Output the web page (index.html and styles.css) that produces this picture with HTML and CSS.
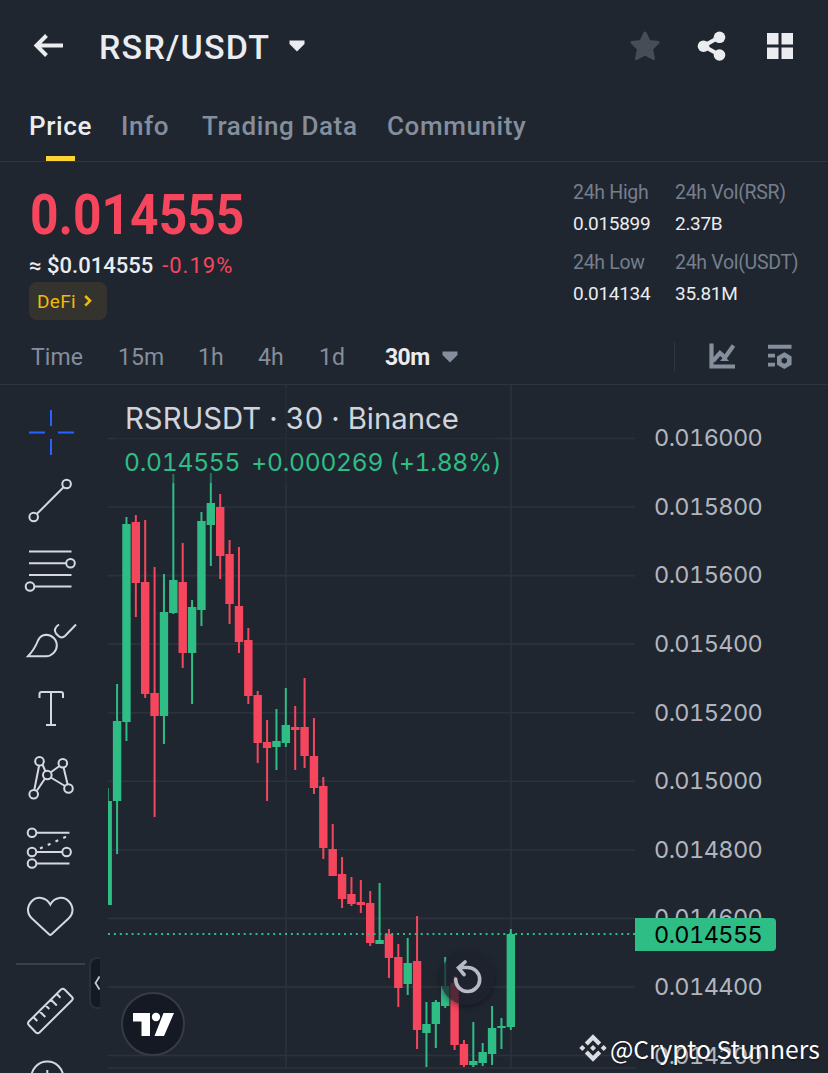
FILE: index.html
```html
<!DOCTYPE html>
<html lang="en">
<head>
<meta charset="UTF-8">
<meta name="viewport" content="width=device-width, initial-scale=1.0">
<title>RSR/USDT</title>
<link rel="stylesheet" href="styles.css">
</head>
<body>
<div class="app">

<header>
    <div class="title-bar">
        <svg class="back" width="30" height="26" viewBox="33 33 30 26"><path d="M63 45.5H37M46.500 35.500L36.500 45.500L46.500 55.500" fill="none" stroke="#eaecef" stroke-width="4"/></svg>
        <h1>RSR/USDT</h1>
        <svg class="caret" width="16" height="12" viewBox="0 0 16 12"><path d="M0.500 0.500h15v3.500L8 11.500L0.500 4z" fill="#eaecef"/></svg>
        <div class="actions">
            <svg width="30" height="30" viewBox="630 31 30 30"><path d="M645 33L649 41.500L658 42.500L651.500 49L653.500 58.500L645 54L636.500 58.500L638.500 49L632 42.500L641 41.500Z" fill="#474d57" stroke="#474d57" stroke-width="3" stroke-linejoin="round"/></svg>
            <svg width="30" height="30" viewBox="697 31 30 30"><path d="M719.500 37L703.500 46L719.500 55" fill="none" stroke="#eaecef" stroke-width="4"/><g fill="#eaecef"><circle cx="719.500" cy="37.300" r="5.800"/><circle cx="703.500" cy="46.200" r="5.800"/><circle cx="719.500" cy="55" r="5.800"/></g></svg>
            <svg width="30" height="30" viewBox="764 31 30 30"><path d="M767 33h11.500v11.500H767zM781.500 33H793v11.500h-11.500zM767 47.500h11.500V59H767zM781.500 47.500H793V59h-11.500z" fill="#eaecef"/></svg>
        </div>
    </div>
    <nav>
        <a class="active" href="#">Price</a>
        <a href="#">Info</a>
        <a href="#">Trading Data</a>
        <a href="#">Community</a>
    </nav>
</header>

<section class="quote">
    <div class="last">
        <div class="price">0.014555</div>
        <div class="approx"><span>≈ $0.014555</span><span class="down">-0.19%</span></div>
        <a class="tag" href="#">DeFi <svg width="8" height="12" viewBox="0 0 8 12"><path d="M1.200 1L6 5.800L1.200 10.600" fill="none" stroke="#f0b90b" stroke-width="2.600"/></svg></a>
    </div>
    <dl class="stats">
        <div><dt>24h High</dt><dd>0.015899</dd></div>
        <div><dt>24h Vol(RSR)</dt><dd>2.37B</dd></div>
        <div><dt>24h Low</dt><dd>0.014134</dd></div>
        <div><dt>24h Vol(USDT)</dt><dd>35.81M</dd></div>
    </dl>
</section>

<div class="intervals">
    <span>Time</span>
    <span>15m</span>
    <span>1h</span>
    <span>4h</span>
    <span>1d</span>
    <span class="active">30m <svg width="16" height="12" viewBox="0 0 16 12"><path d="M0.500 0.500h15v3.500L8 11.500L0.500 4z" fill="#848e9c"/></svg></span>
    <div class="chart-tools">
        <svg width="28" height="28" viewBox="708 343 28 28"><path d="M711.500 343.500V366.500H735M713 361L720 353L725 357.500L733.500 345.500" fill="none" stroke="#848e9c" stroke-width="4.200"/><path d="M720 361h9l-4.500-5z" fill="#848e9c"/></svg>
        <svg width="28" height="28" viewBox="766 343 28 28"><path d="M768 344.700h23.500v4H768zM768 353.800h7v3.700h-7zM768 362.700h7v3.700h-7z" fill="#848e9c"/><path d="M784.300 354.800l5 2.900v5.800l-5 2.900l-5-2.900v-5.800z" fill="none" stroke="#848e9c" stroke-width="4.600"/></svg>
    </div>
</div>

<main>
    <aside>
        <svg class="tool cross" viewBox="22 404 56 56"><path d="M51 410v16M51 439v16M29 432.500h16M58 432.500h16"/></svg>
        <svg class="tool" viewBox="22 473 56 56"><path d="M37 513.800L63.500 487.200"/><circle cx="33.700" cy="517" r="4.300"/><circle cx="66.600" cy="484" r="4.300"/></svg>
        <svg class="tool" viewBox="22 542 56 56"><path d="M29 551.500h42.500M29 563.300h37M29 575h42.500M34.500 586.500h37"/><circle cx="70.500" cy="563.300" r="4.300"/><circle cx="30" cy="586.500" r="4.300"/></svg>
        <svg class="tool" viewBox="22 611 56 56"><path d="M28 656.300H46C52 656 56.800 651 56.800 645.500C56.800 639 51.500 634.800 46 634.800C42 635 39.500 637 38 640.500C35.500 647 33 651 28 656.300Z"/><path d="M59 624.500C54.500 627.500 54 630.500 56 633.500L58.500 636C60.500 637.800 63 637.700 65 636L76 624.500"/></svg>
        <svg class="tool" viewBox="22 680 56 56"><path d="M39.500 698V694q0-2 2-2H61q2 0 2 2v4M51 692v33M46 725h10"/></svg>
        <svg class="tool" viewBox="22 749 56 56"><path d="M39.200 765L34.300 790M37 790.500L45 778.500M42.500 764.500L45.500 771.500M50.500 772.500L59.500 766M63.600 767.500L67.500 784M50.800 777.500L65 786"/><circle cx="39.500" cy="761.300" r="4.300"/><circle cx="62.800" cy="763.300" r="4.300"/><circle cx="47.300" cy="775" r="4.300"/><circle cx="33.700" cy="794.300" r="4.300"/><circle cx="68.500" cy="788.500" r="4.300"/></svg>
        <svg class="tool" viewBox="22 818 56 56"><path d="M36.300 832.800H69.500M36.300 852H62.500M36.300 863.500H69.500"/><path d="M40 848.500L67 836.300" stroke-dasharray="3 5.500"/><circle cx="32" cy="832.800" r="4.300"/><circle cx="32" cy="852" r="4.300"/><circle cx="66.600" cy="852" r="4.300"/><circle cx="32" cy="863.500" r="4.300"/></svg>
        <svg class="tool" viewBox="22 887 56 56"><path d="M50.300 904.500C46 896.500 36.500 896 31.500 901.500C26.500 907 27 914 32 918.500L49.300 934.500q1 .8 2 0L68.500 918.500C73.500 914 74 907 69 901.500C64 896 54.500 896.500 50.300 904.500Z"/></svg>
        <hr>
        <svg class="tool" viewBox="22 983 56 56"><path d="M28.800 1021.500L61 989.500q1.800-1.500 3.600 0L72 997q1.500 1.500 0 3.200L39.500 1032.500q-1.800 1.500-3.600 0L28.800 1025q-1.500-1.700 0-3.500ZM33.800 1017.500l3.500 3.500M39.800 1011.500l5.500 5.500M45.800 1005.500l3.500 3.500M51.300 1000l5.500 5.500M57 994.300l3.500 3.500"/></svg>
        <svg class="tool" viewBox="22 1052 56 56"><circle cx="47.300" cy="1077.500" r="16"/><path d="M47.300 1070v15M40 1077.500h15"/></svg>
        <div class="handle"><svg width="6" height="14" viewBox="0 0 6 14"><path d="M5.500 0.500L1.500 7L5.500 13.500" fill="none" stroke="#c3c6ce" stroke-width="1.800"/></svg></div>
    </aside>
    <div class="plot">
        <svg id="candles" width="528" height="688" viewBox="108 385 528 688"></svg>
        <div class="legend">
            <div class="symbol">RSRUSDT · 30 · Binance</div>
            <div class="change"><span>0.014555</span><span>+0.000269 (+1.88%)</span></div>
        </div>
        <div class="reset"><svg width="32" height="36" viewBox="451 960 32 36"><path d="M455.700 979A12 12 0 1 0 467.700 967.500H459M465 962L458.500 967.800L464 974.500" fill="none" stroke="#b7bac6" stroke-width="3.600" stroke-linecap="round"/></svg></div>
        <div class="tv"><svg width="42" height="26" viewBox="132 1011 42 26"><path d="M133 1013h17v23h-8.500v-14.500H133zM163.500 1013H174l-10 23h-9.500z" fill="#fff"/><circle cx="156" cy="1017" r="4.200" fill="#fff"/></svg></div>
    </div>
    <div class="axis">
        <span>0.016000</span>
        <span>0.015800</span>
        <span>0.015600</span>
        <span>0.015400</span>
        <span>0.015200</span>
        <span>0.015000</span>
        <span>0.014800</span>
        <span>0.014600</span>
        <span>0.014400</span>
        <span>0.014200</span>
        <div class="current">0.014555</div>
    </div>
    <div class="watermark">
        <svg width="28" height="28" viewBox="579 1035 28 28"><path d="M593 1035.300l8.200 8.200l-3 3l-5.200-5.200l-5.200 5.200l-3-3zM593 1062.700l8.200-8.200l-3-3l-5.200 5.200l-5.200-5.200l-3 3zM582.300 1046l3 3l-3 3l-3-3zM603.700 1046l3 3l-3 3l-3-3zM593 1046l3 3l-3 3l-3-3z" fill="#dcdde0"/></svg>
        <span>@Crypto Stunners</span>
    </div>
</main>

</div>
<script src="chart.js"></script>
</body>
</html>
```
FILE: styles.css
```css
body {
    margin: 0;
    background-color: #202630;
    color: #eaecef;
    font-family: Roboto, "Noto Sans", sans-serif;
}

.app {
    width: 828px;
    height: 1073px;
    overflow: hidden;
    display: flex;
    flex-direction: column;
}

svg {
    display: block;
    flex: none;
}

a {
    color: inherit;
    text-decoration: none;
}

header {
    height: 161px;
    border-bottom: 1px solid #2e353f;
    display: flex;
    flex-direction: column;
}

.title-bar {
    height: 92px;
    padding: 0 34px 0 33px;
    display: flex;
    align-items: center;
}

.back {
    margin-bottom: 1px;
}

h1 {
    width: 170px;
    margin: 1px 0 0 36px;
    font-size: 34px;
    line-height: 44px;
    font-weight: 500;
    letter-spacing: 1.2px;
    white-space: nowrap;
}

.caret {
    margin: 0 0 1px 20px;
}

.actions {
    margin-left: auto;
    display: flex;
    gap: 37px;
}

nav {
    flex: 1;
    padding-left: 29px;
    display: grid;
    grid-template-columns: 92px 81px 185px 150px;
    color: #848e9c;
    font-size: 26px;
    font-weight: 500;
    line-height: 69px;
    letter-spacing: 0.6px;
    white-space: nowrap;
}

nav .active {
    position: relative;
    width: 61px;
    color: #eaecef;
}

nav .active::after {
    content: "";
    position: absolute;
    left: 17px;
    bottom: 0;
    width: 29px;
    height: 5px;
    background-color: #fcd535;
}

.quote {
    height: 166px;
    display: flex;
}

.last {
    width: 543px;
    padding-left: 30px;
    white-space: nowrap;
}

.price {
    margin-top: 23px;
    color: #f6465d;
    font-size: 55px;
    line-height: 60px;
    font-weight: 700;
    transform: scaleX(0.905);
    transform-origin: 0 0;
}

.approx {
    margin-top: 6px;
    margin-left: -1px;
    display: flex;
    gap: 9px;
    font-size: 22px;
    line-height: 30px;
    font-weight: 500;
}

.down {
    color: #f6465d;
    font-weight: 400;
    letter-spacing: 1px;
}

.tag {
    width: 70px;
    height: 38px;
    margin: 1px 0 0 -1px;
    padding-left: 8px;
    border-radius: 8px;
    display: flex;
    align-items: center;
    gap: 8px;
    background-color: #35332e;
    color: #f0b90b;
    font-size: 19px;
    letter-spacing: 0.3px;
}

.stats {
    margin: 15px 0 0;
    display: grid;
    grid-template-columns: 102px 150px;
    grid-auto-rows: 69.5px;
    line-height: 31px;
    white-space: nowrap;
}

.stats dt {
    color: #757e8c;
    font-size: 19.5px;
    letter-spacing: -0.3px;
}

.stats dd {
    margin: 0;
    font-size: 19px;
    letter-spacing: -0.3px;
}

.intervals {
    height: 54px;
    padding: 2px 0 0 31px;
    border-bottom: 1px solid #2e353f;
    display: grid;
    grid-template-columns: 87px 80px 60px 61px 66px 289px 1fr;
    align-items: center;
    color: #848e9c;
    font-size: 23px;
    letter-spacing: 0.1px;
}

.intervals .active {
    display: flex;
    align-items: center;
    gap: 12px;
    color: #eaecef;
    font-weight: 700;
    letter-spacing: -0.6px;
}

.chart-tools {
    height: 30px;
    padding-left: 33px;
    border-left: 1px solid #2e353f;
    display: flex;
    align-items: center;
    gap: 30px;
}

main {
    position: relative;
    flex: 1;
    min-height: 0;
    display: flex;
    font-family: Inter, sans-serif;
    font-variant-numeric: tabular-nums;
    overflow: hidden;
}

aside {
    position: relative;
    width: 108px;
    padding-top: 19px;
    box-sizing: border-box;
    display: flex;
    flex-direction: column;
    gap: 13px;
}

.tool {
    width: 56px;
    height: 56px;
    margin-left: 22px;
    fill: none;
    stroke: #d5d8e0;
    stroke-width: 2;
}

.cross {
    stroke: #2962ff;
}

hr {
    width: 69px;
    margin: 7px 0 5px 16px;
    border: 0;
    border-top: 2px solid #3a404b;
}

.handle {
    position: absolute;
    left: 89px;
    top: 572px;
    width: 9px;
    height: 48px;
    border: 2px solid #2a2f3b;
    border-right: 0;
    border-radius: 8px 0 0 8px;
    background-color: #151924;
    display: flex;
    align-items: center;
    justify-content: flex-end;
}

.plot {
    position: relative;
    width: 528px;
}

.legend {
    position: absolute;
    left: 8px;
    top: 3px;
    width: 371px;
    height: 95px;
    padding-left: 8px;
    background-color: rgba(32, 38, 48, 0.5);
    white-space: nowrap;
}

.symbol {
    margin: 12px 0 0 1px;
    color: #d1d4dc;
    font-size: 29.3px;
    line-height: 38px;
}

.change {
    margin-top: 9px;
    display: flex;
    gap: 11px;
    color: #2ebd85;
    font-size: 24.6px;
    line-height: 30px;
    letter-spacing: -0.25px;
}

.reset {
    position: absolute;
    left: 332px;
    top: 566px;
    width: 54px;
    height: 54px;
    border-radius: 50%;
    background-color: rgba(30, 34, 45, 0.75);
    box-shadow: 0 2px 6px rgba(0, 0, 0, 0.4);
    display: flex;
    align-items: center;
    justify-content: center;
}

.tv {
    position: absolute;
    left: 13px;
    top: 607px;
    width: 60px;
    height: 60px;
    border: 2px solid #363b47;
    border-radius: 50%;
    background-color: #151923;
    display: flex;
    align-items: center;
    justify-content: center;
}

.axis {
    position: relative;
    flex: 1;
    padding: 19.3px 0 0 18px;
    display: flex;
    flex-direction: column;
    color: #b2b5be;
    font-size: 23.5px;
    line-height: 68.6px;
    letter-spacing: -0.6px;
}

.axis span {
    height: 68.6px;
    flex: none;
}

.current {
    position: absolute;
    left: -1px;
    top: 533px;
    width: 122px;
    height: 33px;
    padding-left: 19px;
    border-radius: 0 4px 4px 0;
    background-color: #2ebd85;
    color: #000;
    line-height: 33px;
}

.watermark {
    position: absolute;
    left: 579px;
    top: 645px;
    display: flex;
    align-items: center;
    gap: 3px;
    color: #fff;
    font-family: "Noto Sans CJK SC", sans-serif;
    font-size: 24.7px;
    line-height: 36px;
    white-space: nowrap;
    text-shadow: 0 1px 2px rgba(0, 0, 0, 0.5);
}
```
FILE: chart.js
```js
const UP = '#2ebd85';
const DOWN = '#f6465d';
const STEP = 9.375;

// direction, wick top, body top, body bottom, wick bottom
const candles = [
    [1, 788, 801, 905, 905],
    [1, 684, 721, 801, 854],
    [1, 517, 524, 722, 741],
    [0, 515, 522, 583, 617],
    [0, 520, 582, 694, 698],
    [0, 567, 693, 716, 817],
    [1, 574, 612, 716, 744],
    [1, 474, 580, 613, 614],
    [0, 543, 582, 653, 668],
    [1, 600, 607, 653, 704],
    [1, 512, 521, 610, 626],
    [1, 473, 503, 525, 566],
    [0, 494, 507, 556, 579],
    [0, 540, 554, 604, 624],
    [0, 547, 606, 642, 653],
    [0, 628, 640, 696, 704],
    [0, 691, 695, 743, 763],
    [0, 720, 742, 748, 801],
    [1, 709, 741, 747, 770],
    [1, 688, 725, 743, 747],
    [0, 706, 727, 730, 770],
    [0, 678, 727, 756, 768],
    [0, 718, 756, 788, 794],
    [0, 777, 786, 848, 859],
    [0, 824, 849, 876, 876],
    [0, 857, 874, 899, 908],
    [0, 877, 894, 904, 906],
    [0, 880, 902, 905, 913],
    [0, 891, 903, 943, 946],
    [1, 883, 940, 944, 944],
    [0, 929, 934, 958, 978],
    [0, 944, 957, 988, 1007],
    [1, 938, 963, 984, 995],
    [0, 916, 961, 1030, 1049],
    [1, 1002, 1024, 1033, 1067],
    [1, 1000, 1002, 1024, 1048],
    [1, 957, 986, 1006, 1008],
    [0, 976, 983, 1045, 1050],
    [0, 1040, 1044, 1065, 1067],
    [1, 1022, 1061, 1065, 1067],
    [1, 1043, 1052, 1063, 1066],
    [1, 1006, 1028, 1054, 1065],
    [1, 1018, 1026, 1028, 1049],
    [1, 929, 934, 1027, 1030]
];

let out = '';

// grid
for (let i = 0; i < 10; i++) {
    const y = 438.5 + i * 68.55;
    out += `<path d="M108 ${y}H635" stroke="#2c323c" stroke-width="1.6"/>`;
}
out += '<path d="M286 385V1068M511 385V1068" stroke="#2c323c" stroke-width="1.6"/>';
out += '<path d="M108 1068H636" stroke="#2c323c" stroke-width="1.6"/>';

candles.forEach(([up, high, top, bottom, low], i) => {
    const x = 107.7 + i * STEP;
    const color = up ? UP : DOWN;
    out += `<rect x="${x - 1}" y="${high}" width="2" height="${low - high}" fill="${color}"/>`;
    out += `<rect x="${x - 4.2}" y="${top}" width="8.4" height="${bottom - top}" fill="${color}"/>`;
});

// last price
out += `<path d="M108 934H636" stroke="${UP}" stroke-width="2" stroke-dasharray="2 3.9"/>`;

document.getElementById('candles').innerHTML = out;
```
